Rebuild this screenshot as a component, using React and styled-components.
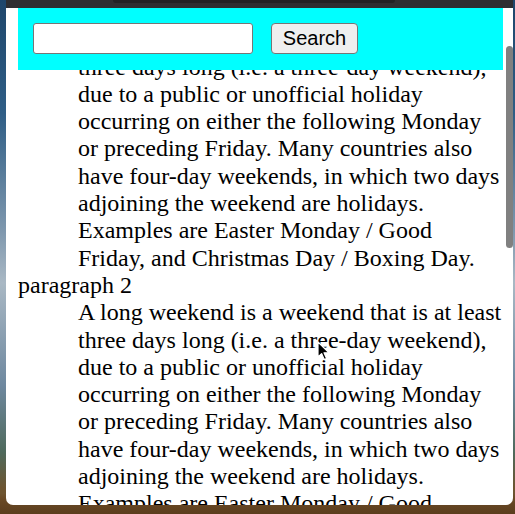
import React, { useLayoutEffect, useRef } from 'react';
import styled, { createGlobalStyle } from 'styled-components';

const GlobalStyle = createGlobalStyle`
  html, body {
    margin: 0;
    padding: 0;
  }
  body {
    width: 515px;
    height: 514px;
    overflow: hidden;
  }
`;

const LONG_WEEKEND =
  'A long weekend is a weekend that is at least three days long (i.e. a three-day weekend), due to a public or unofficial holiday occurring on either the following Monday or preceding Friday. Many countries also have four-day weekends, in which two days adjoining the weekend are holidays. Examples are Easter Monday / Good Friday, and Christmas Day / Boxing Day.';

const paragraphs = [1, 2, 3, 4].map((n) => ({ title: `paragraph ${n}`, text: LONG_WEEKEND }));

function App() {
  const viewportRef = useRef(null);

  useLayoutEffect(() => {
    if (viewportRef.current) viewportRef.current.scrollTop = 83;
  }, []);

  return (
    <Desktop>
      <GlobalStyle />
      <Window>
        <TitleBar>
          <TabStrip />
        </TitleBar>
        <Viewport ref={viewportRef}>
          <Page>
            <SearchBar>
              <SearchInput type='text' />
              <SearchButton type='button'>Search</SearchButton>
            </SearchBar>
            <List>
              {paragraphs.map((p) => (
                <React.Fragment key={p.title}>
                  <Term>{p.title}</Term>
                  <Definition>{p.text}</Definition>
                </React.Fragment>
              ))}
            </List>
          </Page>
        </Viewport>
        <ScrollThumb />
      </Window>
      <Cursor width='13' height='20' viewBox='0 0 13 20'>
        <path d='M1 1 L1 16 L4.6 12.6 L7.2 18.6 L9.6 17.6 L7 11.8 L12 11.8 Z' fill='#000' stroke='#fff' strokeWidth='1.2' strokeLinejoin='round' />
      </Cursor>
    </Desktop>
  );
}

export default App;

const Desktop = styled.div`
  position: relative;
  box-sizing: border-box;
  width: 515px;
  height: 514px;
  padding: 0 2px 9px 6px;
  display: flex;
  background:
    linear-gradient(to bottom, rgba(0, 0, 0, 0) 96%, #6a4a26 97%, #5b3d1d 100%),
    linear-gradient(to bottom, #1e466b 0%, #2f5e86 22%, #7f98ae 45%, #a9b8c4 55%, #6e889f 75%, #4f6a5c 88%, #6d5430 95%);
`;

const Window = styled.div`
  position: relative;
  flex: 1;
  display: flex;
  flex-direction: column;
  border-radius: 0 0 7px 7px;
  overflow: hidden;
  background: #ffffff;
`;

const TitleBar = styled.div`
  height: 8px;
  flex: none;
  background: #2e2e31;
  display: flex;
  justify-content: center;
`;

const TabStrip = styled.div`
  width: 282px;
  height: 3px;
  margin-right: 12px;
  background: #222225;
  border-radius: 0 0 5px 5px;
`;

const Viewport = styled.div`
  flex: 1;
  overflow-y: auto;
  scrollbar-width: none;

  &::-webkit-scrollbar {
    display: none;
  }
`;

const Page = styled.div`
  padding: 12px 10px 12px 12px;
  font-family: 'Liberation Serif', 'Times New Roman', serif;
  font-size: 24px;
  line-height: 27.3px;
  color: #000;
`;

const SearchBar = styled.div`
  position: sticky;
  top: 0;
  z-index: 2;
  height: 62px;
  box-sizing: border-box;
  padding: 15px;
  display: flex;
  align-items: flex-start;
  gap: 18px;
  background: #00ffff;
`;

const SearchInput = styled.input`
  width: 220px;
  height: 31px;
  box-sizing: border-box;
  margin: 0;
  padding: 2px 4px;
  border: 1px solid #767676;
  border-radius: 3px;
  background: #fff;
  font-family: 'Liberation Sans', Arial, sans-serif;
  font-size: 20px;
`;

const SearchButton = styled.button`
  width: 87px;
  height: 31px;
  box-sizing: border-box;
  margin: 0;
  padding: 0;
  border: 1px solid #767676;
  border-radius: 4px;
  background: #efefef;
  color: #000;
  font-family: 'Liberation Sans', Arial, sans-serif;
  font-size: 20px;
  line-height: 29px;
`;

const List = styled.dl`
  margin: 0;
`;

const Term = styled.dt`
  margin: 0;
`;

const Definition = styled.dd`
  margin: 0 0 0 60px;
`;

const ScrollThumb = styled.div`
  position: absolute;
  top: 46px;
  right: 0;
  width: 7px;
  height: 202px;
  border-radius: 4px;
  background: #808080;
`;

const Cursor = styled.svg`
  position: absolute;
  left: 317px;
  top: 341px;
`;
